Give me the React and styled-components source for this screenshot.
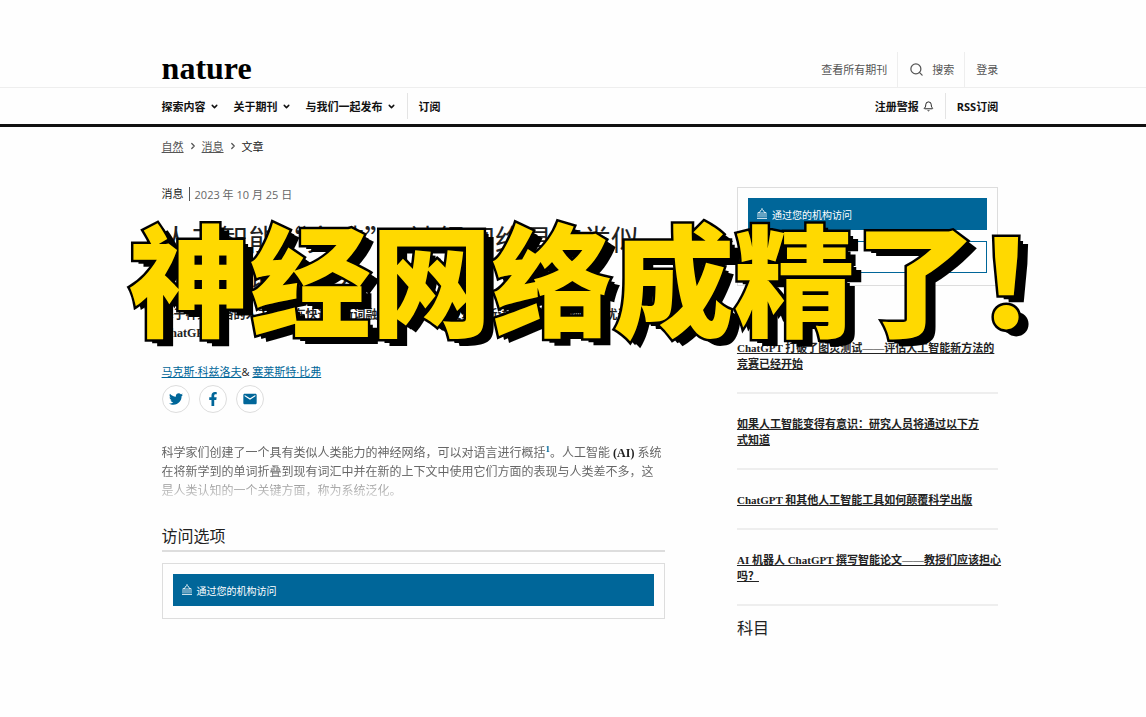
import styled, { createGlobalStyle } from "styled-components";
import { Search, Bell, ChevronDown, ChevronRight } from "lucide-react";
import { FaTwitter, FaFacebookF } from "react-icons/fa";
import { MdEmail } from "react-icons/md";

const GlobalStyle = createGlobalStyle`
  * {
    box-sizing: border-box;
  }
  body {
    margin: 0;
    background: #fefefe;
    color: #222;
    font-family: "Open Sans", "Noto Sans CJK SC", sans-serif;
    font-size: 11px;
  }
  a {
    color: inherit;
  }
`;

const Page = styled.div`
  position: relative;
  padding: 48px 0 64px;
  overflow: hidden;
`;

const Container = styled.div`
  width: 73%;
  margin-left: 14.1%;
`;

const TopBar = styled(Container)`
  display: flex;
  align-items: flex-end;
  justify-content: space-between;
  height: 39px;
`;

const Logo = styled.a`
  font-family: "Liberation Serif", serif;
  font-size: 32px;
  line-height: 38px;
  font-weight: bold;
  color: #000;
  text-decoration: none;
`;

const NavGroup = styled.nav`
  display: flex;
  align-items: center;
`;

const NavItem = styled.a`
  display: flex;
  align-items: center;
  gap: 4px;
  height: 35px;
  line-height: 35px;
  color: ${(props) => (props.$strong ? "#111" : "#555")};
  font-weight: ${(props) => (props.$strong ? "bold" : "normal")};
  text-decoration: none;
  white-space: nowrap;
`;

const TopItem = styled(NavItem)`
  gap: 8px;
  margin-left: 11px;
  padding-right: ${(props) => (props.$last ? "0" : "10px")};
  border-right: ${(props) => (props.$last ? "none" : "1px solid #eee")};
`;

const MenuBar = styled.header`
  border-top: 1px solid #eee;
  border-bottom: 3px solid #111;
`;

const MenuRow = styled(Container)`
  display: flex;
  align-items: center;
  justify-content: space-between;
  height: 36px;
`;

const MenuGroup = styled(NavGroup)`
  gap: 15px;
`;

const Divider = styled.span`
  width: 1px;
  height: 26px;
  background: #e4e4e4;
  margin: 0 -4px;
`;

const Breadcrumbs = styled(Container)`
  display: flex;
  align-items: center;
  gap: 4px;
  height: 38px;
  color: #555;
`;

const CurrentPage = styled.span`
  color: #222;
`;

const Columns = styled(Container)`
  display: grid;
  grid-template-columns: minmax(0, 503fr) minmax(0, 261fr);
  column-gap: 72px;
  padding-top: 20px;
`;

const Meta = styled.div`
  display: flex;
  align-items: center;
  height: 17px;
  color: #666;
`;

const Category = styled.span`
  color: #222;
  padding-right: 5px;
  margin-right: 5px;
  border-right: 1px solid #555;
  line-height: 14px;
`;

const Title = styled.h1`
  margin: 18px 0 0;
  font-family: "Noto Sans CJK SC", sans-serif;
  font-size: 29px;
  line-height: 36px;
  font-weight: normal;
`;

const Summary = styled.p`
  margin: 14px 0 0;
  font-size: 12px;
  line-height: 18px;
  font-weight: bold;
  font-family: "Liberation Serif", "Noto Sans CJK SC", serif;
`;

const Authors = styled.p`
  margin: 22px 0 5px;
  line-height: 16px;
  a {
    color: #069;
  }
`;

const ShareList = styled.div`
  display: flex;
  gap: 9px;
`;

const ShareButton = styled.button`
  display: grid;
  place-items: center;
  width: 28px;
  height: 28px;
  padding: 0;
  color: #069;
  background: #fff;
  border: 1px solid #ddd;
  border-radius: 50%;
`;

const Teaser = styled.p`
  margin: 31px 0 0;
  font-family: "Liberation Serif", "Noto Sans CJK SC", serif;
  font-size: 12px;
  line-height: 19px;
  color: #666;
  mask-image: linear-gradient(#000 50%, transparent 110%);
  b {
    color: #222;
  }
  sup {
    color: #069;
    font-size: 9px;
    font-weight: bold;
    line-height: 0;
  }
`;

const SectionTitle = styled.h2`
  margin: 23px 0 11px;
  padding-bottom: 4px;
  font-family: "Noto Sans CJK SC", sans-serif;
  font-size: 16px;
  line-height: 22px;
  font-weight: normal;
  border-bottom: 2px solid #ddd;
`;

const SideTitle = styled.h2`
  margin: 10px 0 0;
  font-family: "Noto Sans CJK SC", sans-serif;
  font-size: 16px;
  line-height: 22px;
  font-weight: normal;
`;

const Sidebar = styled.aside`
  padding-top: 2px;
`;

const AccessBox = styled.section`
  display: grid;
  gap: 11px;
  padding: 10px 10px 12px;
  border: 1px solid #ddd;
`;

const AccessButton = styled.button`
  display: flex;
  align-items: center;
  gap: 5px;
  width: 100%;
  height: 32px;
  padding: 0 8px;
  color: ${(props) => (props.$outline ? "#069" : "#fff")};
  background: ${(props) => (props.$outline ? "#fff" : "#069")};
  border: 1px solid #069;
  font-family: inherit;
  font-size: 10px;
  text-align: left;
`;

const RelatedItem = styled.div`
  padding: 22px 0 20px;
  border-bottom: 2px solid #eee;
  font-family: "Liberation Serif", "Noto Sans CJK SC", serif;
  font-size: 11px;
  line-height: 16px;
  font-weight: bold;
  white-space: pre;
`;

const Banner = styled.div`
  position: absolute;
  top: 190px;
  left: 50%;
  margin-left: -444px;
  font-family: "Noto Sans CJK SC", sans-serif;
  font-size: 121px;
  line-height: 170px;
  font-weight: 900;
  white-space: nowrap;
  color: #ffd900;
  -webkit-text-stroke: 5px #000;
  paint-order: stroke fill;
  text-shadow: 5px 4px 0 #000, 10px 7px 0 #000;
`;

const InstitutionIcon = () => (
  <svg width="10" height="12" viewBox="0 0 10 12" fill="none" stroke="currentColor" strokeWidth="0.8">
    <path d="M0 10.500h10M1 9.500V4.500h2M7 4.500h2v5M3 9.500V3L5 1.500 7 3v6.500M5 4v5.500M5 0v1.500" />
  </svg>
);

const menus = ["探索内容", "关于期刊", "与我们一起发布"];

const related = [
  "ChatGPT 打破了图灵测试——评估人工智能新方法的\n竞赛已经开始",
  "如果人工智能变得有意识：研究人员将通过以下方\n式知道",
  "ChatGPT 和其他人工智能工具如何颠覆科学出版",
  "AI 机器人 ChatGPT 撰写智能论文——教授们应该担心\n吗？",
];

export default function App() {
  return (
    <Page>
      <GlobalStyle />
      <TopBar>
        <Logo href="#">nature</Logo>
        <NavGroup>
          <TopItem href="#">查看所有期刊</TopItem>
          <TopItem href="#">
            <Search size={15} />
            搜索
          </TopItem>
          <TopItem href="#" $last>登录</TopItem>
        </NavGroup>
      </TopBar>
      <MenuBar>
        <MenuRow>
          <MenuGroup>
            {menus.map((label) => (
              <NavItem href="#" $strong key={label}>
                {label}
                <ChevronDown size={9} strokeWidth={4} />
              </NavItem>
            ))}
            <Divider />
            <NavItem href="#" $strong>订阅</NavItem>
          </MenuGroup>
          <MenuGroup>
            <NavItem href="#" $strong>
              注册警报
              <Bell size={11} />
            </NavItem>
            <Divider />
            <NavItem href="#" $strong>RSS订阅</NavItem>
          </MenuGroup>
        </MenuRow>
      </MenuBar>
      <Breadcrumbs>
        <a href="#">自然</a>
        <ChevronRight size={10} strokeWidth={3} />
        <a href="#">消息</a>
        <ChevronRight size={10} strokeWidth={3} />
        <CurrentPage>文章</CurrentPage>
      </Breadcrumbs>
      <Columns>
        <main>
          <Meta>
            <Category>消息</Category>
            2023 年 10 月 25 日
          </Meta>
          <Title>人工智能“突破”：神经网络具有类似人类的语言能力</Title>
          <Summary>
            基于神经网络的人工智能在快速将新词融入现有词汇以及理解新语境方面的表现明显优于 ChatGPT。
          </Summary>
          <Authors>
            <a href="#">马克斯·科兹洛夫</a>&amp; <a href="#">塞莱斯特·比弗</a>
          </Authors>
          <ShareList>
            <ShareButton aria-label="Twitter">
              <FaTwitter size={14} />
            </ShareButton>
            <ShareButton aria-label="Facebook">
              <FaFacebookF size={14} />
            </ShareButton>
            <ShareButton aria-label="Email">
              <MdEmail size={16} />
            </ShareButton>
          </ShareList>
          <Teaser>
            科学家们创建了一个具有类似人类能力的神经网络，可以对语言进行概括<sup>1</sup>。人工智能 <b>(AI)</b> 系统在将新学到的单词折叠到现有词汇中并在新的上下文中使用它们方面的表现与人类差不多，这是人类认知的一个关键方面，称为系统泛化。
          </Teaser>
          <SectionTitle>访问选项</SectionTitle>
          <AccessBox>
            <AccessButton>
              <InstitutionIcon />
              通过您的机构访问
            </AccessButton>
          </AccessBox>
        </main>
        <Sidebar>
          <AccessBox>
            <AccessButton>
              <InstitutionIcon />
              通过您的机构访问
            </AccessButton>
            <AccessButton $outline />
          </AccessBox>
          <SideTitle>相关文章</SideTitle>
          {related.map((text) => (
            <RelatedItem key={text}>
              <a href="#">{text}</a>
            </RelatedItem>
          ))}
          <SideTitle>科目</SideTitle>
        </Sidebar>
      </Columns>
      <Banner>神经网络成精了！</Banner>
    </Page>
  );
}
